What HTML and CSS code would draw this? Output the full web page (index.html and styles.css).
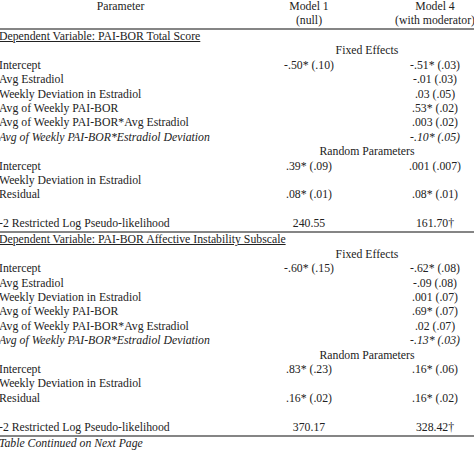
FILE: index.html
```html
<!DOCTYPE html>
<html lang="en">
<head>
<meta charset="utf-8">
<title>Table</title>
<link rel="stylesheet" href="styles.css">
</head>
<body>
<div class="table">
  <div class="head">
    <div class="row hrow"><div class="c center">Parameter</div><div class="c center">Model 1</div><div class="c center">Model 4</div></div>
    <div class="row hrow"><div class="c"></div><div class="c center">(null)</div><div class="c center">(with moderator)</div></div>
  </div>

  <div class="section">
    <div class="row"><div class="c full"><span class="dv">Dependent Variable: PAI-BOR Total Score</span></div></div>
    <div class="row"><div class="c"></div><div class="c span center">Fixed Effects</div></div>
    <div class="row"><div class="c">Intercept</div><div class="c center">-.50* (.10)</div><div class="c center">-.51* (.03)</div></div>
    <div class="row"><div class="c">Avg Estradiol</div><div class="c"></div><div class="c center">-.01 (.03)</div></div>
    <div class="row"><div class="c">Weekly Deviation in Estradiol</div><div class="c"></div><div class="c center">.03 (.05)</div></div>
    <div class="row"><div class="c">Avg of Weekly PAI-BOR</div><div class="c"></div><div class="c center">.53* (.02)</div></div>
    <div class="row"><div class="c">Avg of Weekly PAI-BOR*Avg Estradiol</div><div class="c"></div><div class="c center">.003 (.02)</div></div>
    <div class="row it"><div class="c">Avg of Weekly PAI-BOR*Estradiol Deviation</div><div class="c"></div><div class="c center">-.10* (.05)</div></div>
    <div class="row"><div class="c"></div><div class="c span center">Random Parameters</div></div>
    <div class="row"><div class="c">Intercept</div><div class="c center">.39* (.09)</div><div class="c center">.001 (.007)</div></div>
    <div class="row"><div class="c">Weekly Deviation in Estradiol</div><div class="c"></div><div class="c"></div></div>
    <div class="row"><div class="c">Residual</div><div class="c center">.08* (.01)</div><div class="c center">.08* (.01)</div></div>
    <div class="row blank"></div>
    <div class="row"><div class="c">-2 Restricted Log Pseudo-likelihood</div><div class="c center">240.55</div><div class="c center">161.70†</div></div>
  </div>

  <div class="section">
    <div class="row"><div class="c full"><span class="dv">Dependent Variable: PAI-BOR Affective Instability Subscale</span></div></div>
    <div class="row"><div class="c"></div><div class="c span center">Fixed Effects</div></div>
    <div class="row"><div class="c">Intercept</div><div class="c center">-.60* (.15)</div><div class="c center">-.62* (.08)</div></div>
    <div class="row"><div class="c">Avg Estradiol</div><div class="c"></div><div class="c center">-.09 (.08)</div></div>
    <div class="row"><div class="c">Weekly Deviation in Estradiol</div><div class="c"></div><div class="c center">.001 (.07)</div></div>
    <div class="row"><div class="c">Avg of Weekly PAI-BOR</div><div class="c"></div><div class="c center">.69* (.07)</div></div>
    <div class="row"><div class="c">Avg of Weekly PAI-BOR*Avg Estradiol</div><div class="c"></div><div class="c center">.02 (.07)</div></div>
    <div class="row it"><div class="c">Avg of Weekly PAI-BOR*Estradiol Deviation</div><div class="c"></div><div class="c center">-.13* (.03)</div></div>
    <div class="row"><div class="c"></div><div class="c span center">Random Parameters</div></div>
    <div class="row"><div class="c">Intercept</div><div class="c center">.83* (.23)</div><div class="c center">.16* (.06)</div></div>
    <div class="row"><div class="c">Weekly Deviation in Estradiol</div><div class="c"></div><div class="c"></div></div>
    <div class="row"><div class="c">Residual</div><div class="c center">.16* (.02)</div><div class="c center">.16* (.02)</div></div>
    <div class="row blank"></div>
    <div class="row"><div class="c">-2 Restricted Log Pseudo-likelihood</div><div class="c center">370.17</div><div class="c center">328.42†</div></div>
  </div>

  <div class="section">
    <div class="row it"><div class="c full">Table Continued on Next Page</div></div>
  </div>
</div>
</body>
</html>
```

FILE: styles.css
```css
html, body {
  margin: 0;
  padding: 0;
  background: #ffffff;
}
body {
  width: 474px;
  height: 450px;
  overflow: hidden;
  font-family: "Liberation Serif", "Times New Roman", serif;
  font-size: 11.75px;
  color: #222222;
}
.table {
  width: 474px;
}
.row {
  display: grid;
  grid-template-columns: 241px 136px 116px;
  width: 493px;
  height: 14.4px;
  line-height: 14.4px;
  white-space: nowrap;
}
.hrow {
  height: 14px;
  line-height: 14px;
}
.c {
  margin-left: -1px;
}
.center {
  text-align: center;
  margin-left: 0;
}
.span {
  grid-column: 2 / 4;
}
.full {
  grid-column: 1 / -1;
}
.it {
  font-style: italic;
}
.dv {
  text-decoration: underline;
  text-underline-offset: 1px;
  text-decoration-thickness: 1px;
}
.section {
  border-top: 2px solid #858585;
  width: 474px;
}
```
